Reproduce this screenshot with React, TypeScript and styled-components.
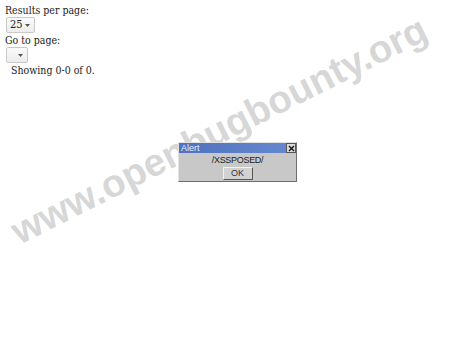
import React from "react";
import styled, { createGlobalStyle } from "styled-components";

const GlobalStyle = createGlobalStyle`
  html, body {
    margin: 0;
    padding: 0;
    background: #fff;
  }
  body {
    width: 474px;
    height: 355px;
    overflow: hidden;
    position: relative;
    font-family: "DejaVu Serif Condensed", "DejaVu Serif", serif;
    font-stretch: condensed;
    color: #222;
  }
`;

const Page = styled.div`
  display: flex;
  flex-direction: column;
  align-items: flex-start;
  padding: 3px 5px 0;
  font-size: 10.5px;
  line-height: 14px;
`;

const Label = styled.div<{ indent?: number }>`
  margin-left: ${(p) => p.indent || 0}px;
`;

const Select = styled.div<{ width: number; empty?: boolean }>`
  box-sizing: border-box;
  width: ${(p) => p.width}px;
  height: 16px;
  margin: 0 0 0 1px;
  padding: 0 4px 0 3px;
  display: flex;
  align-items: center;
  justify-content: ${(p) => (p.empty ? "flex-end" : "space-between")};
  border: 1px solid #c9c9c9;
  border-radius: 2px;
  background: linear-gradient(#fbfbfb, #ececec);
  font-size: 11px;
`;

const Caret = () => (
  <svg width="5" height="3" viewBox="0 0 5 3">
    <path d="M0 0h5L2.5 3z" fill="#555" />
  </svg>
);

const Watermark = styled.div`
  position: absolute;
  left: 219px;
  top: 130px;
  transform: translate(-50%, -50%) rotate(-26.7deg);
  white-space: nowrap;
  font-family: "Liberation Sans", Arial, sans-serif;
  font-weight: bold;
  font-size: 38.5px;
  color: rgba(165, 165, 165, 0.45);
  pointer-events: none;
`;

const Dialog = styled.div`
  position: absolute;
  left: 178px;
  top: 142px;
  width: 119px;
  height: 40px;
  box-sizing: border-box;
  border: 1px solid;
  border-color: #e2e2e2 #6e6e6e #6e6e6e #e2e2e2;
  background: #c8c8c8;
  display: flex;
  flex-direction: column;
  font-family: "Liberation Sans", Arial, sans-serif;
`;

const TitleBar = styled.div`
  height: 10px;
  display: flex;
  align-items: stretch;
`;

const Title = styled.div`
  flex: 1;
  background: linear-gradient(90deg, #4f72bd, #6587cf);
  color: #e8eeff;
  font-size: 9px;
  line-height: 10px;
  padding-left: 2px;
`;

const Close = styled.div`
  width: 10px;
  box-sizing: border-box;
  border: 1px solid #555;
  background: #dcdcdc;
  display: flex;
  align-items: center;
  justify-content: center;
`;

const Body = styled.div`
  flex: 1;
  display: flex;
  flex-direction: column;
  align-items: center;
  padding-top: 2px;
`;

const Message = styled.div`
  font-size: 9px;
  line-height: 11px;
  letter-spacing: -0.3px;
  color: #222;
`;

const OkButton = styled.div`
  box-sizing: border-box;
  width: 30px;
  height: 13px;
  margin-top: 1px;
  border: 1px solid;
  border-color: #f2f2f2 #555 #555 #f2f2f2;
  background: #d2d2d2;
  font-size: 9px;
  line-height: 11px;
  text-align: center;
  color: #333;
`;

export default function App() {
  return (
    <>
      <GlobalStyle />
      <Page>
        <Label>Results per page:</Label>
        <Select width={29}>
          <span>25</span>
          <Caret />
        </Select>
        <Label>Go to page:</Label>
        <Select width={22} empty>
          <Caret />
        </Select>
        <Label indent={6}>Showing 0-0 of 0.</Label>
      </Page>
      <Watermark>www.openbugbounty.org</Watermark>
      <Dialog>
        <TitleBar>
          <Title>Alert</Title>
          <Close>
            <svg width="7" height="7" viewBox="0 0 7 7">
              <path d="M1 1l5 5M6 1l-5 5" stroke="#111" strokeWidth="1.4" />
            </svg>
          </Close>
        </TitleBar>
        <Body>
          <Message>/XSSPOSED/</Message>
          <OkButton>OK</OkButton>
        </Body>
      </Dialog>
    </>
  );
}
